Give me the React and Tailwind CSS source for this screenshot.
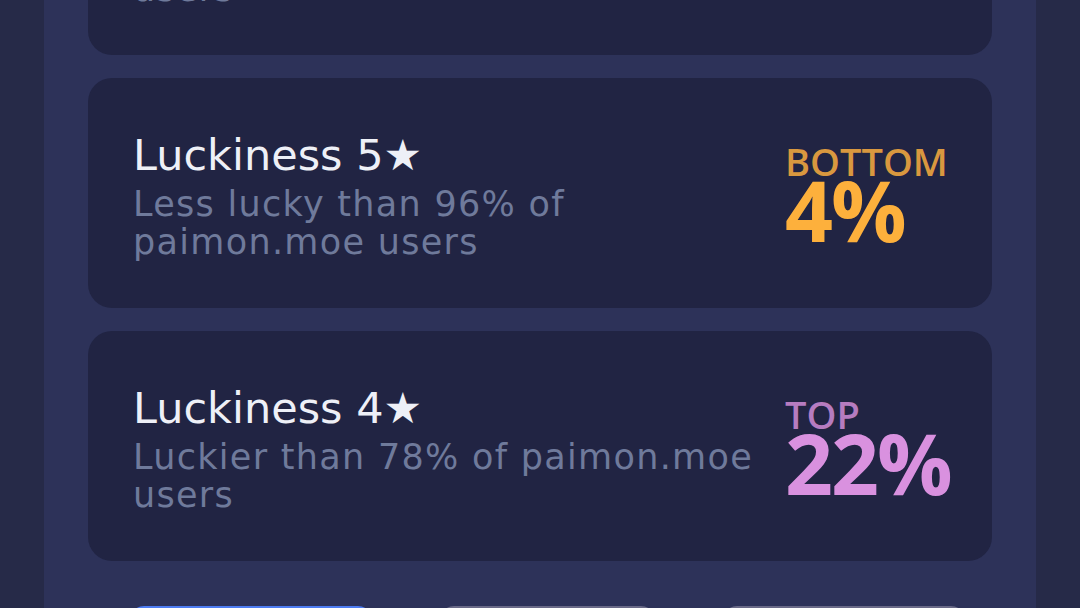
import React from 'react';

const cards = [
    { title: 'Luckiness 4★', desc: 'Luckier than 64% of paimon.moe users', label: 'TOP', value: '36%', tone: 'purple' },
    { title: 'Luckiness 5★', desc: 'Less lucky than 96% of paimon.moe users', label: 'BOTTOM', value: '4%', tone: 'orange' },
    { title: 'Luckiness 4★', desc: 'Luckier than 78% of paimon.moe users', label: 'TOP', value: '22%', tone: 'purple' },
];

const LuckCard = ({ card, className = '' }) => {
    const labelColor = card.tone === 'orange' ? 'text-[#d9983f]' : 'text-[#b67cc0]';
    const valueColor = card.tone === 'orange' ? 'text-[#fdb03c]' : 'text-[#d991df]';
    return (
        <div className={`flex items-center justify-between h-[230px] rounded-[24px] bg-[#212443] px-[45px] ${className}`}>
            <div className="flex flex-col w-[630px] font-['DejaVu_Sans',sans-serif]">
                <p className="text-[43px] leading-[60px] text-[#eef0f7]">{card.title}</p>
                <p className="text-[35px] leading-[38px] tracking-[1.3px] text-[#6f7a9b]">{card.desc}</p>
            </div>
            <div className="flex flex-col w-[162px] font-['Open_Sans',sans-serif]">
                <span className={`text-[38px] leading-[34px] font-semibold ${labelColor}`}>{card.label}</span>
                <span className={`text-[84px] leading-[64px] tracking-[-2px] font-bold ${valueColor}`}>{card.value}</span>
            </div>
        </div>
    );
};

export default function App() {
    return (
        <div className="h-[608px] overflow-hidden bg-[#262a48] px-[44px]">
            <div className="h-full bg-[#2d3259] px-[44px] flex flex-col gap-[23px]">
                <LuckCard card={cards[0]} className="shrink-0 -mt-[175px]" />
                <LuckCard card={cards[1]} className="shrink-0" />
                <LuckCard card={cards[2]} className="shrink-0" />
                {/* Buttons */}
                <div className="flex shrink-0 mt-[22px] pl-[42px] gap-[68px]">
                    <div className="w-[242px] h-[40px] rounded-[14px] bg-[#4d7cf2]" />
                    <div className="w-[215px] h-[40px] rounded-[14px] bg-[#6a6a88]" />
                    <div className="w-[242px] h-[40px] rounded-[14px] bg-[#6a6a88]" />
                </div>
            </div>
        </div>
    );
}
